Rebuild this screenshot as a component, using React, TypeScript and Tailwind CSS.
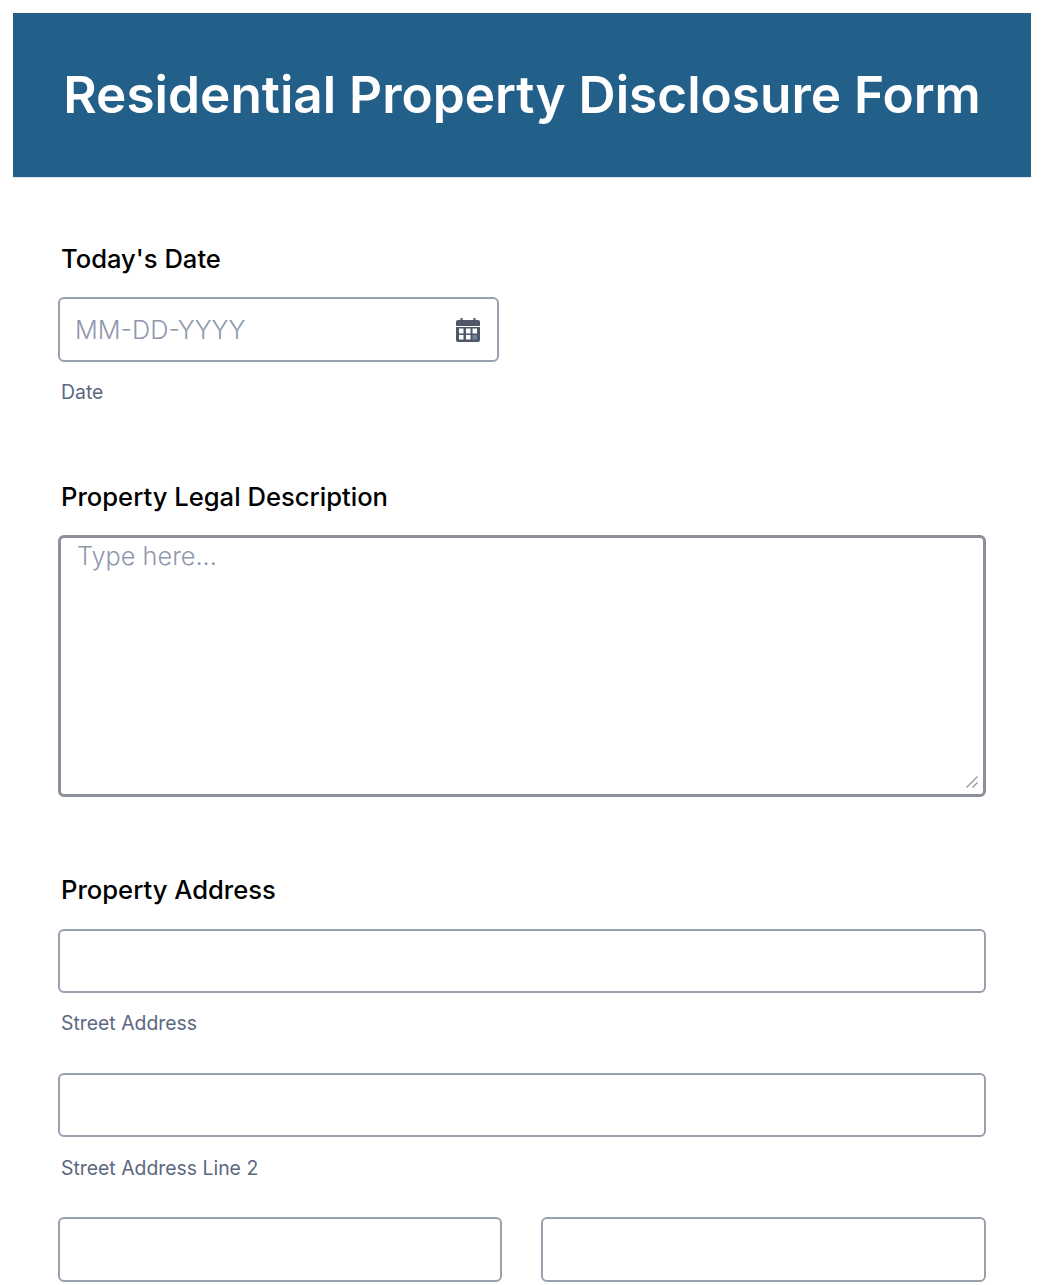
import React from "react";

const inputClass = "block w-full rounded-md border-2 border-[#98a0ae] bg-white px-[15px] text-[25.3px] font-light text-[#2c3345] outline-none";

const SubLabel: React.FC<{ className?: string; children: React.ReactNode }> = ({ className = "mt-[18px]", children }) => (
  <p className={`${className} ml-[3px] text-[19.4px] leading-6 text-[#5b6780]`}>{children}</p>
);

const CalendarIcon = () => (
  <svg viewBox="0 0 24 24" className="w-6 h-6 fill-[#4f5869]">
    <path d="M4.5 0h2v2h11V0h2v2H22a2 2 0 0 1 2 2v4H0V4a2 2 0 0 1 2-2h2.5z" />
    <path
      fillRule="evenodd"
      d="M0 9h24v13a2 2 0 0 1-2 2H2a2 2 0 0 1-2-2zm3 1.500v5h4.500v-5zm7 0v5h4.500v-5zm6.500 0v5H21v-5zM3 17v4.500h4.500V17zm7 0v4.500h4.500V17z"
    />
    <rect x="16.5" y="17" width="4.5" height="4.5" className="fill-[#71869b]" />
  </svg>
);

export default function App() {
  return (
    <div className="min-h-screen bg-white p-[13px] font-['Inter',sans-serif] text-black overflow-hidden">
      <header className="h-[164px] pb-[1px] bg-[#225f89] flex items-center justify-center shadow-[0_1px_0_#dfe5ea]">
        <h1 className="text-[51.3px] leading-none font-semibold text-white whitespace-nowrap">
          Residential Property Disclosure Form
        </h1>
      </header>

      <main className="pl-[45px] pr-[45px]">
        <section className="pt-[67px]">
          <h2 className="ml-[3px] text-[25.6px] leading-[30px] font-medium">Today's Date</h2>
          <div className="relative mt-[23px] w-[441px]">
            <input className={`${inputClass} h-[65px] placeholder:text-[#8f98ad]`} placeholder="MM-DD-YYYY" />
            <div className="absolute right-[19px] top-[21px]">
              <CalendarIcon />
            </div>
          </div>
          <SubLabel>Date</SubLabel>
        </section>

        <section className="pt-[78px]">
          <h2 className="ml-[3px] text-[25.6px] leading-[30px] font-medium">Property Legal Description</h2>
          <div className="relative mt-[23px]">
            <textarea
              className="block w-full h-[262px] resize-none rounded-md border-[3px] border-[#8b8f9a] bg-white px-[16px] py-[2px] text-[25.3px] font-light leading-[32px] outline-none placeholder:text-[#8f98ad]"
              placeholder="Type here..."
            />
            <svg viewBox="0 0 12 12" className="absolute right-[8px] bottom-[9px] w-3 h-3 stroke-[#8b92a0]" fill="none">
              <path d="M0.5 11.500 11.500 0.500M6.500 11.500 11.500 6.500" strokeWidth="1.2" />
            </svg>
          </div>
        </section>

        <section className="pt-[78px]">
          <h2 className="ml-[3px] text-[25.6px] leading-[30px] font-medium">Property Address</h2>
          <input className={`${inputClass} h-16 mt-[24px]`} />
          <SubLabel>Street Address</SubLabel>
          <input className={`${inputClass} h-16 mt-[38px]`} />
          <SubLabel className="mt-[19px]">Street Address Line 2</SubLabel>
          <div className="mt-[37px] grid grid-cols-[444px_1fr] gap-[39px]">
            <input className={`${inputClass} h-[65px]`} />
            <input className={`${inputClass} h-[65px]`} />
          </div>
        </section>
      </main>
    </div>
  );
}
